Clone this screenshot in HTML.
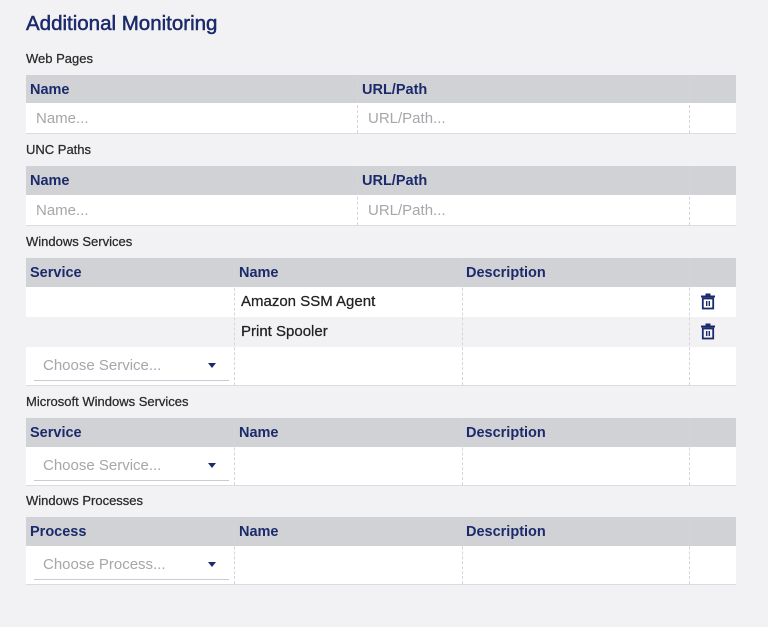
<!DOCTYPE html>
<html><head><meta charset="utf-8"><style>
*{margin:0;padding:0;box-sizing:border-box}
body{width:768px;height:627px;background:#f2f2f4;font-family:"Liberation Sans",sans-serif;position:relative;overflow:hidden}
.a{position:absolute}
.t{position:absolute;left:26px;color:#1b2a6b;font-size:20.5px;-webkit-text-stroke:0.5px #1b2a6b}
.l{position:absolute;left:26px;font-size:13px;color:#2a2a2a;-webkit-text-stroke:0.25px #2a2a2a}
.h{position:absolute;left:26px;width:710px;height:29px;background:#d1d2d6}
.r{position:absolute;left:26px;width:710px;background:#fff}
.g{background:#f2f2f4}
.bb{border-bottom:1px solid #dcdcdf}
.hc{position:absolute;top:7px;font-size:14.5px;font-weight:bold;color:#1b2a6b}
.v{position:absolute;width:0;border-left:1px dashed #d6d6da}
.ph{position:absolute;font-size:15px;color:#a6a6ab}
.tx{position:absolute;font-size:15px;color:#222;-webkit-text-stroke:0.25px #222}
.sel{position:absolute;left:8px;width:195px;height:31px;border-bottom:1px solid #c9cad6}
.sel span{position:absolute;left:9px;top:7px;font-size:15px;color:#a6a6ab}
.sel i{position:absolute;left:174px;top:13px;width:0;height:0;border-left:4px solid transparent;border-right:4px solid transparent;border-top:5px solid #1b2a6b}
</style></head><body>
<div class="t" style="top:12px">Additional Monitoring</div>

<div class="l" style="top:51px">Web Pages</div>
<div class="h" style="top:75px"><div class="hc" style="left:4px">Name</div><div class="hc" style="left:336px">URL/Path</div></div>
<div class="r bb" style="top:103px;height:31px"><div class="ph" style="left:10px;top:7px">Name...</div><div class="ph" style="left:342px;top:7px">URL/Path...</div></div>
<div class="v" style="left:357px;top:75px;height:58px"></div><div class="v" style="left:689px;top:75px;height:58px"></div>

<div class="l" style="top:142px">UNC Paths</div>
<div class="h" style="top:166px"><div class="hc" style="left:4px">Name</div><div class="hc" style="left:336px">URL/Path</div></div>
<div class="r bb" style="top:195px;height:31px"><div class="ph" style="left:10px;top:7px">Name...</div><div class="ph" style="left:342px;top:7px">URL/Path...</div></div>
<div class="v" style="left:357px;top:166px;height:59px"></div><div class="v" style="left:689px;top:166px;height:59px"></div>

<div class="l" style="top:234px">Windows Services</div>
<div class="h" style="top:258px"><div class="hc" style="left:4px">Service</div><div class="hc" style="left:213px">Name</div><div class="hc" style="left:440px">Description</div></div>
<div class="r" style="top:287px;height:30px"><div class="tx" style="left:215px;top:6px">Amazon SSM Agent</div></div>
<div class="r g" style="top:317px;height:30px"><div class="tx" style="left:215px;top:6px">Print Spooler</div></div>
<div class="r bb" style="top:347px;height:39px"><div class="sel" style="top:3px"><span>Choose Service...</span><i></i></div></div>
<div class="v" style="left:234px;top:258px;height:127px"></div><div class="v" style="left:462px;top:258px;height:127px"></div><div class="v" style="left:689px;top:258px;height:127px"></div>
<svg class="a" style="left:700px;top:293px" width="16" height="17" viewBox="0 0 16 17"><rect x="1" y="2.5" width="14" height="2" fill="#1b2a6b"/><rect x="5.5" y="0.5" width="5" height="2" fill="#1b2a6b"/><rect x="2.8" y="5.5" width="10.4" height="10" fill="none" stroke="#1b2a6b" stroke-width="1.8"/><rect x="6" y="8" width="1.4" height="5" fill="#1b2a6b"/><rect x="8.6" y="8" width="1.4" height="5" fill="#1b2a6b"/></svg>
<svg class="a" style="left:700px;top:323px" width="16" height="17" viewBox="0 0 16 17"><rect x="1" y="2.5" width="14" height="2" fill="#1b2a6b"/><rect x="5.5" y="0.5" width="5" height="2" fill="#1b2a6b"/><rect x="2.8" y="5.5" width="10.4" height="10" fill="none" stroke="#1b2a6b" stroke-width="1.8"/><rect x="6" y="8" width="1.4" height="5" fill="#1b2a6b"/><rect x="8.6" y="8" width="1.4" height="5" fill="#1b2a6b"/></svg>

<div class="l" style="top:394px">Microsoft Windows Services</div>
<div class="h" style="top:418px"><div class="hc" style="left:4px">Service</div><div class="hc" style="left:213px">Name</div><div class="hc" style="left:440px">Description</div></div>
<div class="r bb" style="top:447px;height:39px"><div class="sel" style="top:3px"><span>Choose Service...</span><i></i></div></div>
<div class="v" style="left:234px;top:418px;height:67px"></div><div class="v" style="left:462px;top:418px;height:67px"></div><div class="v" style="left:689px;top:418px;height:67px"></div>

<div class="l" style="top:493px">Windows Processes</div>
<div class="h" style="top:517px"><div class="hc" style="left:4px">Process</div><div class="hc" style="left:213px">Name</div><div class="hc" style="left:440px">Description</div></div>
<div class="r bb" style="top:546px;height:39px"><div class="sel" style="top:3px"><span>Choose Process...</span><i></i></div></div>
<div class="v" style="left:234px;top:517px;height:67px"></div><div class="v" style="left:462px;top:517px;height:67px"></div><div class="v" style="left:689px;top:517px;height:67px"></div>
</body></html>
